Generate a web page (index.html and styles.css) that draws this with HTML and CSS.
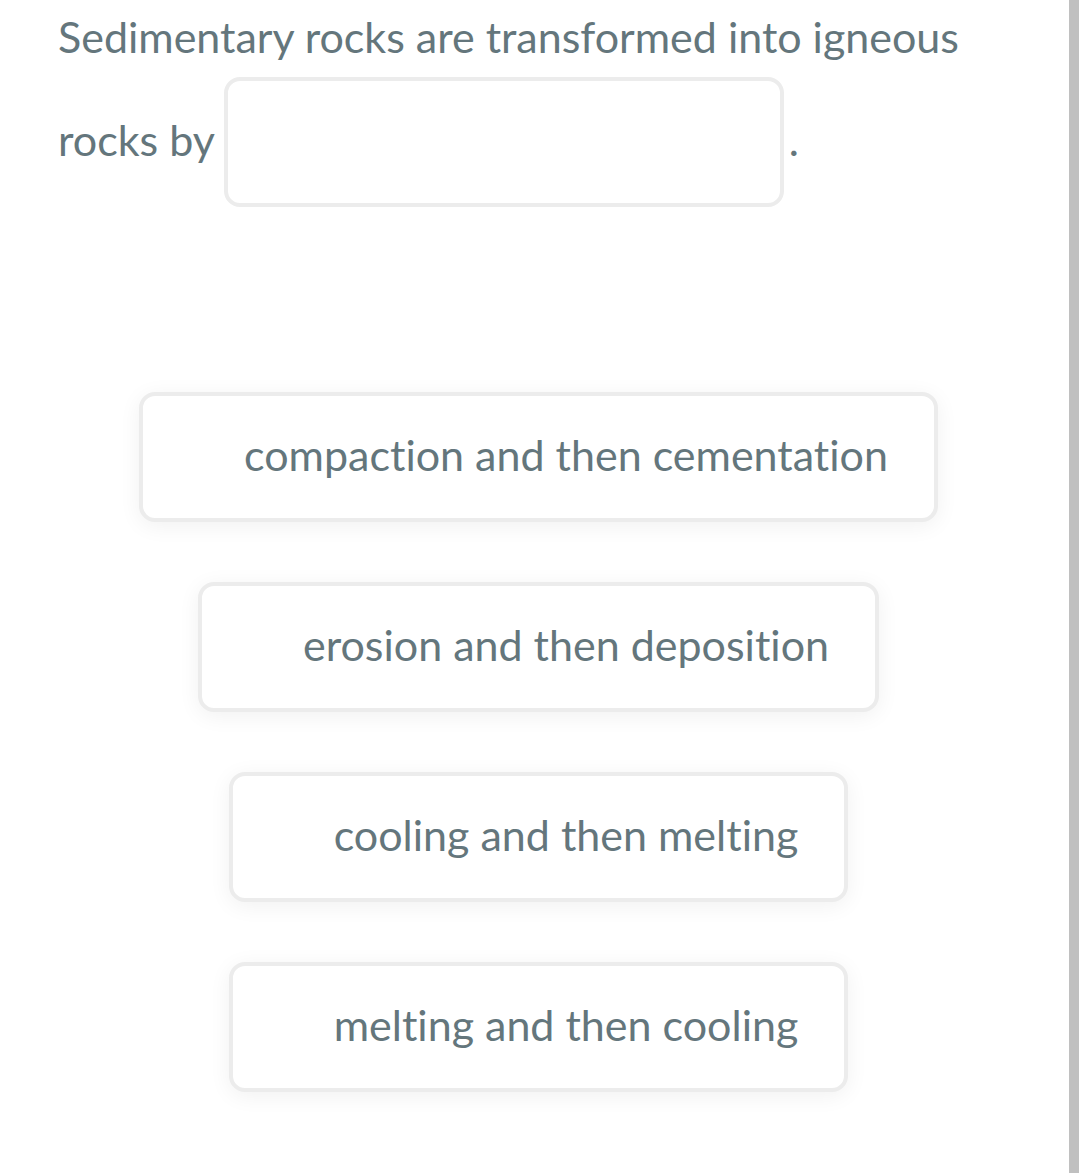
FILE: index.html
```html
<!DOCTYPE html>
<html lang="en">
<head>
<meta charset="utf-8">
<title>Question</title>
<link rel="stylesheet" href="styles.css">
</head>
<body>
<main class="page">
  <p class="question">Sedimentary rocks are transformed into igneous rocks by<span class="blank"></span>.</p>
  <ul class="options">
    <li class="option">compaction and then cementation</li>
    <li class="option">erosion and then deposition</li>
    <li class="option">cooling and then melting</li>
    <li class="option">melting and then cooling</li>
  </ul>
</main>
<div class="scrollbar"></div>
</body>
</html>
```

FILE: styles.css
```css
html, body {
  margin: 0;
  padding: 0;
  background: #ffffff;
}

body {
  font-family: "Lato", "Noto Sans", sans-serif;
  font-variant-ligatures: none;
  color: #64767c;
  min-height: 1173px;
}

.page {
  padding: 0 60px 0 58px;
}

.question {
  margin: 0;
  padding-top: 5px;
  font-size: 43px;
  line-height: 64px;
  max-width: 960px;
}

.blank {
  display: inline-block;
  box-sizing: border-box;
  width: 560px;
  height: 130px;
  margin: 8px 5px 0 9px;
  border: 4px solid #ececec;
  border-radius: 16px;
  vertical-align: -51px;
  background: #fff;
}

.options {
  list-style: none;
  margin: 185px 0 0 0;
  padding: 0;
  display: flex;
  flex-direction: column;
  align-items: center;
  gap: 60px;
}

.option {
  box-sizing: border-box;
  height: 130px;
  display: flex;
  align-items: center;
  padding: 0 46px 6px 101px;
  border: 4px solid #ececec;
  border-radius: 16px;
  background: #fff;
  box-shadow: 0 4px 22px rgba(0, 0, 0, 0.06);
  font-size: 43px;
  white-space: nowrap;
}

.scrollbar {
  position: fixed;
  top: 0;
  right: 0;
  width: 10px;
  height: 100%;
  background: #c0c0c0;
}
```
